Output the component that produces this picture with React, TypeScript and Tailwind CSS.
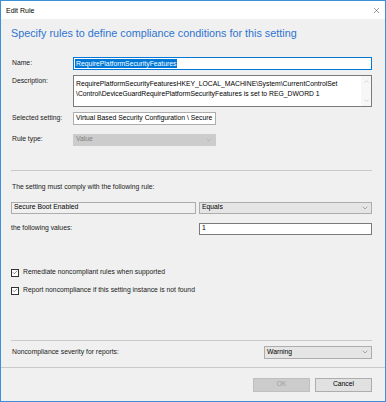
import { Check, ChevronDown, ChevronUp, X } from "lucide-react";

const font = { fontFamily: '"Liberation Sans", Arial, sans-serif' };

function Combo({ value, className = "", disabled = false }: { value: string; className?: string; disabled?: boolean }) {
  return (
    <div
      className={`flex items-center justify-between border px-[2px] ${
        disabled ? "border-[#cccccc] bg-[#cccccc] text-[#838383]" : "border-[#adadad] bg-[#e5e5e5] text-black"
      } ${className}`}
    >
      <span>{value}</span>
      <ChevronDown className={`h-[8px] w-[8px] ${disabled ? "text-[#a0a0a0]" : "text-[#606060]"}`} strokeWidth={1.5} />
    </div>
  );
}

function CheckRow({ label }: { label: string }) {
  return (
    <div className="flex items-center gap-[4px]">
      <span className="flex h-[8px] w-[8px] items-center justify-center border border-[#333333] bg-white">
        <Check className="h-[7px] w-[7px] text-[#222]" strokeWidth={2} />
      </span>
      <span>{label}</span>
    </div>
  );
}

export default function App() {
  return (
    <div className="h-[402px] w-[386px] overflow-hidden bg-white" style={font}>
      <div className="flex h-[402px] w-[386px] flex-col border border-[#3c8fd9] bg-[#f0f0f0] text-[6.8px] leading-none text-[#1a1a1a]">
        {/* title bar */}
        <div className="flex h-[18px] shrink-0 items-center justify-between bg-white pl-[5px] pr-[4px]">
          <span className="text-[7px] text-black">Edit Rule</span>
          <X className="h-[9px] w-[9px] text-[#333]" strokeWidth={1.3} />
        </div>

        <div className="flex flex-1 flex-col pl-[10px] pr-[13px]">
          <h1 className="mt-[9px] text-[10.8px] font-normal leading-none text-[#2f74d0]">
            Specify rules to define compliance conditions for this setting
          </h1>

          {/* Name */}
          <div className="mt-[18px] flex items-center">
            <span className="w-[62px] shrink-0 pl-px">Name:</span>
            <div className="flex h-[13px] flex-1 items-center border border-[#0078d7] bg-white px-[1px]">
              <span className="bg-[#0078d7] px-px leading-[9px] text-white">RequirePlatformSecurityFeatures</span>
            </div>
          </div>

          {/* Description */}
          <div className="mt-[5px] flex items-start">
            <span className="w-[62px] shrink-0 pl-px pt-[3px]">Description:</span>
            <div className="flex h-[32px] flex-1 border border-[#7a7a7a] bg-white">
              <div className="flex-1 px-[2px] pt-[3px] leading-[10px] text-black">
                RequirePlatformSecurityFeaturesHKEY_LOCAL_MACHINE\System\CurrentControlSet
                <br />
                \Control\DeviceGuardRequirePlatformSecurityFeatures is set to REG_DWORD 1
              </div>
              <div className="flex w-[10px] flex-col items-center justify-between bg-[#f7f7f7] py-[2px]">
                <ChevronUp className="h-[7px] w-[7px] text-[#a8a8a8]" strokeWidth={1.5} />
                <ChevronDown className="h-[7px] w-[7px] text-[#a8a8a8]" strokeWidth={1.5} />
              </div>
            </div>
          </div>

          {/* Selected setting */}
          <div className="mt-[5px] flex items-center">
            <span className="w-[62px] shrink-0 pl-px">Selected setting:</span>
            <div className="flex h-[13px] w-[143px] items-center overflow-hidden whitespace-nowrap border border-[#adadad] bg-white px-[2px] text-black">
              Virtual Based Security Configuration \ Secure
            </div>
          </div>

          {/* Rule type */}
          <div className="mt-[9px] flex items-center">
            <span className="w-[62px] shrink-0 pl-px">Rule type:</span>
            <Combo value="Value" disabled className="h-[12px] w-[143px]" />
          </div>

          <div className="mt-[24px] h-px bg-[#c9c9c9]" />

          <div className="mt-[13px] pl-px">The setting must comply with the following rule:</div>

          <div className="mt-[11px] flex items-center gap-[3px]">
            <div className="flex h-[12px] w-[185px] items-center border border-[#adadad] bg-[#f0f0f0] px-[2px] text-black">
              Secure Boot Enabled
            </div>
            <Combo value="Equals" className="h-[12px] flex-1" />
          </div>

          <div className="mt-[9px] flex items-center">
            <span className="w-[188px] shrink-0">the following values:</span>
            <div className="flex h-[12px] flex-1 items-center border border-[#7a7a7a] bg-white px-[2px] text-black">1</div>
          </div>

          <div className="mt-[34px] flex flex-col gap-[10px]">
            <CheckRow label="Remediate noncompliant rules when supported" />
            <CheckRow label="Report noncompliance if this setting instance is not found" />
          </div>

          <div className="mt-[45px] h-px bg-[#c9c9c9]" />

          <div className="mt-[5px] flex items-center justify-between">
            <span className="pl-px">Noncompliance severity for reports:</span>
            <Combo value="Warning" className="h-[13px] w-[108px]" />
          </div>
        </div>

        <div className="h-px shrink-0 bg-[#c9c9c9]" />
        <div className="flex h-[33px] shrink-0 items-center justify-end gap-[5px] pr-[13px]">
          <button className="h-[14px] w-[57px] border border-[#bfbfbf] bg-[#cccccc] text-[6.8px] leading-none text-[#a0a0a0]">OK</button>
          <button className="h-[14px] w-[57px] border border-[#adadad] bg-[#e1e1e1] text-[6.8px] leading-none text-black">Cancel</button>
        </div>
      </div>
    </div>
  );
}
